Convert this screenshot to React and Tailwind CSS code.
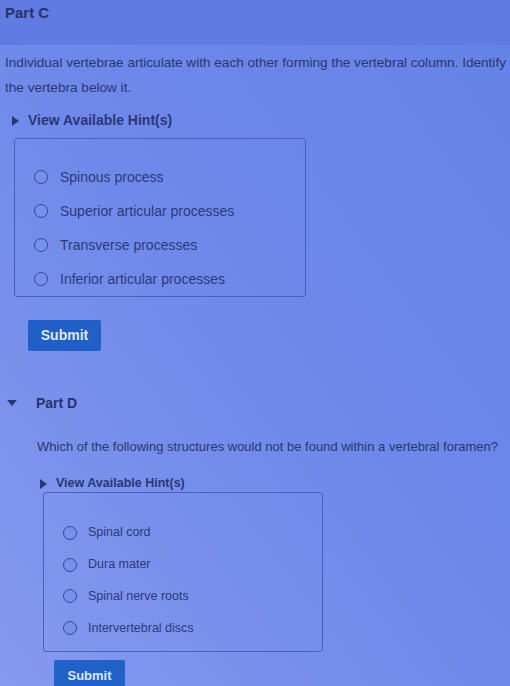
const partC = {
  options: [
    'Spinous process',
    'Superior articular processes',
    'Transverse processes',
    'Inferior articular processes',
  ],
}

const partD = {
  prompt: 'Which of the following structures would not be found within a vertebral foramen?',
  options: ['Spinal cord', 'Dura mater', 'Spinal nerve roots', 'Intervertebral discs'],
}

function HintToggle({ className = '' }) {
  return (
    <button className={`flex items-center gap-[9px] font-bold text-[#2a3775] ${className}`}>
      <svg width="7" height="10" viewBox="0 0 7 10" className="shrink-0">
        <path d="M0 0 L7 5 L0 10 Z" fill="#2a3775" />
      </svg>
      View Available Hint(s)
    </button>
  )
}

function Radio() {
  return <span className="block w-[14px] h-[14px] shrink-0 rounded-full border-[1.5px] border-[#3b4888] bg-[#7690ee]" />
}

function ChoiceBox({ options, className = '', rowClass = '' }) {
  return (
    <div className={`rounded-[3px] border border-[#4b60b8] ${className}`}>
      {options.map((opt) => (
        <label key={opt} className={`flex items-center text-[#2c3a78] ${rowClass}`}>
          <Radio />
          <span>{opt}</span>
        </label>
      ))}
    </div>
  )
}

export default function App() {
  return (
    <div
      className="w-[510px] h-[686px] overflow-hidden bg-gradient-to-tr from-[#8699ee] via-[#6e89ea] to-[#6582e6]"
      style={{ fontFamily: '"Liberation Sans", Arial, sans-serif' }}
    >
      {/* Part C header strip */}
      <div className="h-[45px] bg-[#607be1] px-[5px] pt-[2px]">
        <h2 className="text-[15px] font-bold text-[#27336c]">Part C</h2>
      </div>

      {/* Part C body */}
      <div className="pl-[5px] pt-[5px]">
        <p className="text-[13.6px] leading-[25px] text-[#2a376f] whitespace-nowrap">
          Individual vertebrae articulate with each other forming the vertebral column. Identify
          <br />
          the vertebra below it.
        </p>
        <HintToggle className="mt-[12px] ml-[7px] text-[14px] leading-[17px]" />
        <ChoiceBox
          options={partC.options}
          className="mt-[9px] ml-[9px] w-[292px] pt-[21px] text-[14px]"
          rowClass="h-[34px] pl-[19px] gap-[12px]"
        />
        <button className="mt-[23px] ml-[23px] h-[31px] w-[73px] rounded-[2px] bg-[#1f5fc6] text-[14px] font-bold text-[#dfe8ff]">
          Submit
        </button>
      </div>

      {/* Part D */}
      <div className="mt-[42px] h-[20px] flex items-center">
        <svg width="10" height="6" viewBox="0 0 10 6" className="ml-[7px]">
          <path d="M0 0 L10 0 L5 6 Z" fill="#2a3775" />
        </svg>
        <h2 className="ml-[19px] text-[14px] font-bold text-[#27336c]">Part D</h2>
      </div>
      <div className="pl-[37px]">
        <p className="mt-[26px] text-[13px] leading-[15px] text-[#2a376f]">{partD.prompt}</p>
        <HintToggle className="mt-[22px] ml-[3px] text-[12.5px] leading-[15px]" />
        <ChoiceBox
          options={partD.options}
          className="mt-[1px] ml-[6px] w-[280px] pt-[24px] pb-[7px] text-[12.5px]"
          rowClass="h-[31.7px] pl-[19px] gap-[11px]"
        />
        <button className="mt-[8px] ml-[17px] h-[32px] w-[71px] rounded-[2px] bg-[#2162c9] text-[13px] font-bold text-[#dfe8ff]">
          Submit
        </button>
      </div>
    </div>
  )
}
